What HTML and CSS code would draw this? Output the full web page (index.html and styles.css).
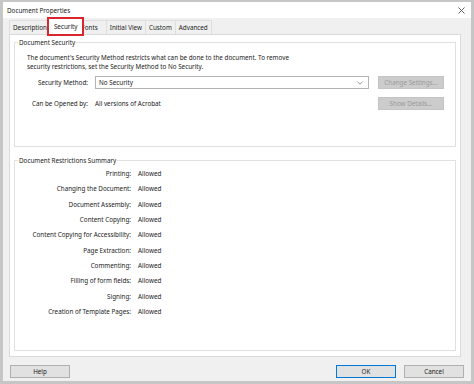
FILE: index.html
```html
<!DOCTYPE html>
<html lang="en">
<head>
    <meta charset="UTF-8">
    <title>Document Properties</title>
    <link rel="stylesheet" href="styles.css">
</head>
<body>
    <div class="window">
        <div class="titlebar">
            <span>Document Properties</span>
            <svg class="close" width="7" height="7" viewBox="0 0 7 7">
                <path d="M0.5 0.5 L6.5 6.5 M6.5 0.5 L0.5 6.5" stroke="#555" stroke-width="0.9"/>
            </svg>
        </div>

        <div class="tabs">
            <div class="tab">Description</div>
            <div class="tab active">Security</div>
            <div class="tab fonts">Fonts</div>
            <div class="tab">Initial View</div>
            <div class="tab">Custom</div>
            <div class="tab">Advanced</div>
        </div>

        <div class="panel">
            <fieldset class="group security">
                <legend>Document Security</legend>
                <p class="intro">The document's Security Method restricts what can be done to the document. To remove<br>security restrictions, set the Security Method to No Security.</p>
                <div class="form">
                    <span class="label">Security Method:</span>
                    <div class="select">
                        <span>No Security</span>
                        <svg width="6" height="4" viewBox="0 0 6 4">
                            <path d="M0.5 0.8 L3 3.2 L5.5 0.8" fill="none" stroke="#777" stroke-width="0.8"/>
                        </svg>
                    </div>
                    <button class="btn disabled">Change Settings...</button>

                    <span class="label">Can be Opened by:</span>
                    <span class="value">All versions of Acrobat</span>
                    <button class="btn disabled">Show Details...</button>
                </div>
            </fieldset>

            <fieldset class="group summary">
                <legend>Document Restrictions Summary</legend>
                <div class="rows">
                    <span class="label">Printing:</span><span>Allowed</span>
                    <span class="label">Changing the Document:</span><span>Allowed</span>
                    <span class="label">Document Assembly:</span><span>Allowed</span>
                    <span class="label">Content Copying:</span><span>Allowed</span>
                    <span class="label">Content Copying for Accessibility:</span><span>Allowed</span>
                    <span class="label">Page Extraction:</span><span>Allowed</span>
                    <span class="label">Commenting:</span><span>Allowed</span>
                    <span class="label">Filling of form fields:</span><span>Allowed</span>
                    <span class="label">Signing:</span><span>Allowed</span>
                    <span class="label">Creation of Template Pages:</span><span>Allowed</span>
                </div>
            </fieldset>
        </div>

        <div class="footer">
            <button class="btn">Help</button>
            <div class="spacer"></div>
            <button class="btn primary">OK</button>
            <button class="btn">Cancel</button>
        </div>
    </div>
</body>
</html>
```

FILE: styles.css
```css
body {
    margin: 0;
    font-family: "Noto Sans", sans-serif;
    font-size: 6.3px;
    color: #222;
}
.window {
    width: 474px;
    height: 384px;
    box-sizing: border-box;
    border: 3px solid #c6c6c6;
    border-top-width: 2px;
    background: #f0f0f0;
    display: flex;
    flex-direction: column;
}
.titlebar {
    height: 16px;
    flex: none;
    background: #fff;
    display: flex;
    align-items: center;
    justify-content: space-between;
    padding: 1px 6px 0 4px;
    box-sizing: border-box;
}
.close {
    display: block;
}
.tabs {
    display: flex;
    align-items: flex-end;
    height: 15px;
    margin-top: 1px;
    padding-left: 6px;
    flex: none;
}
.tab {
    position: relative;
    padding: 0 3px;
    height: 13px;
    line-height: 13px;
    border: 1px solid #dedede;
    border-bottom: none;
    margin-right: -1px;
    background: #f0f0f0;
}
.tab.active {
    height: 15px;
    line-height: 15px;
    padding: 0 5px;
    margin: 0 -6px 0 -2px;
    background: #fff;
    z-index: 1;
}
.tab.active::after {
    content: "";
    position: absolute;
    left: -2px;
    right: -1px;
    top: -2px;
    bottom: -2px;
    border: 2px solid #d8262c;
}
.tab.fonts {
    padding: 0 8px 0 3px;
}
.panel {
    flex: none;
    height: 323px;
    box-sizing: border-box;
    margin: 0 10px 0 6px;
    background: #fff;
    border: 1px solid #dadada;
    padding: 3px 4px 0;
    display: flex;
    flex-direction: column;
    gap: 9px;
}
.group {
    margin: 0;
    padding: 0;
    border: 1px solid #e0e0e0;
    min-width: 0;
}
.group legend {
    margin-left: 3px;
    padding: 0 1px;
    line-height: 9px;
}
.security {
    height: 109px;
    box-sizing: border-box;
}
.intro {
    margin: 6px 0 0 12px;
    line-height: 9px;
}
.form {
    display: grid;
    grid-template-columns: 73px 1fr 67px;
    grid-auto-rows: 13px;
    column-gap: 7px;
    row-gap: 8px;
    align-items: center;
    margin-top: 5px;
    padding-right: 11px;
}
.label {
    text-align: right;
}
.select {
    height: 13px;
    box-sizing: border-box;
    border: 1px solid #b4b4b4;
    margin-right: 1px;
    display: flex;
    align-items: center;
    justify-content: space-between;
    padding: 0 5px 0 3px;
}
.btn {
    font-family: inherit;
    font-size: inherit;
    color: #222;
    height: 13px;
    padding: 0;
    background: #e1e1e1;
    border: 1px solid #b0b0b0;
    margin: 0;
}
.btn.disabled {
    background: #cccccc;
    border-color: #c4c4c4;
    color: #9a9a9a;
}
.form .btn {
    margin-left: 1px;
}
.summary {
    flex: 1;
    margin-bottom: 5px;
}
.rows {
    display: grid;
    grid-template-columns: 116px auto;
    grid-auto-rows: 15.3px;
    column-gap: 7px;
    align-items: center;
    margin-top: 1px;
}
.footer {
    flex: 1;
    display: flex;
    align-items: flex-start;
    padding: 8px 7px 0;
    gap: 8px;
}
.footer .btn {
    width: 60px;
}
.footer .spacer {
    flex: 1;
}
.btn.primary {
    border-color: #0078d7;
}
```
